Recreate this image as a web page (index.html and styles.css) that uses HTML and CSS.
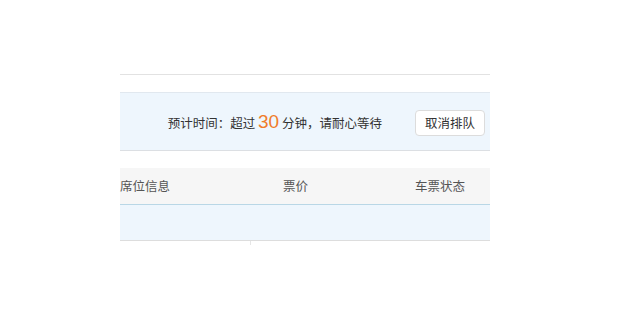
FILE: index.html
```html
<!doctype html>
<html lang="zh-CN">
  <head>
    <meta charset="utf-8">
    <title>排队等待</title>
    <link rel="stylesheet" href="styles.css">
  </head>
  <body>
    <div class="panel">
      <div class="divider"></div>

      <div class="queue">
        <span class="queue-msg">预计时间：超过 <em class="num">30</em> 分钟，请耐心等待</span>
        <button type="button" class="btn-cancel">取消排队</button>
      </div>

      <div class="ticket-table">
        <div class="ticket-head">
          <span>席位信息</span>
          <span>票价</span>
          <span>车票状态</span>
        </div>
        <div class="ticket-row"></div>
        <div class="tick"></div>
      </div>
    </div>
  </body>
</html>
```

FILE: styles.css
```css
body {
  margin: 0;
  background: #fff;
  font-family: "Noto Sans CJK SC", "Microsoft YaHei", sans-serif;
  font-size: 12.5px;
  color: #333;
}

.panel {
  width: 370px;
  margin: 74px 0 0 120px;
}

.divider {
  border-top: 1px solid #e2e2e2;
}

.queue {
  margin-top: 17px;
  height: 57px;
  border-top: 1px solid #e1e8ef;
  border-bottom: 1px solid #dcdfe3;
  background: #eef6fd;

  display: flex;
  align-items: center;
  justify-content: flex-end;
  padding-right: 5px;
}

.queue-msg {
  margin-right: 33px;
  line-height: 20px;
  margin-top: 1px;
}

.queue-msg .num {
  font-style: normal;
  font-family: "Liberation Sans", Arial, sans-serif;
  font-size: 19px;
  color: #f07c2a;
}

.btn-cancel {
  height: 26px;
  padding: 0 9px;
  border: 1px solid #dcdcdc;
  border-radius: 4px;
  background: #fff;
  font-family: inherit;
  font-size: 12.5px;
  color: #333;
  line-height: 24px;
  margin-top: 3px;
}

.ticket-table {
  margin-top: 17px;
}

.ticket-head {
  display: grid;
  grid-template-columns: 163px 132px 1fr;
  align-items: center;
  height: 34px;
  padding-bottom: 2px;
  background: #f6f6f6;
  border-bottom: 1px solid #b9d7e6;
  color: #555;
}

.ticket-row {
  height: 35px;
  background: #eef6fd;
  border-bottom: 1px solid #dddddd;
}

.tick {
  width: 1px;
  height: 4px;
  margin-left: 130px;
  background: #e6e6e6;
}
```
